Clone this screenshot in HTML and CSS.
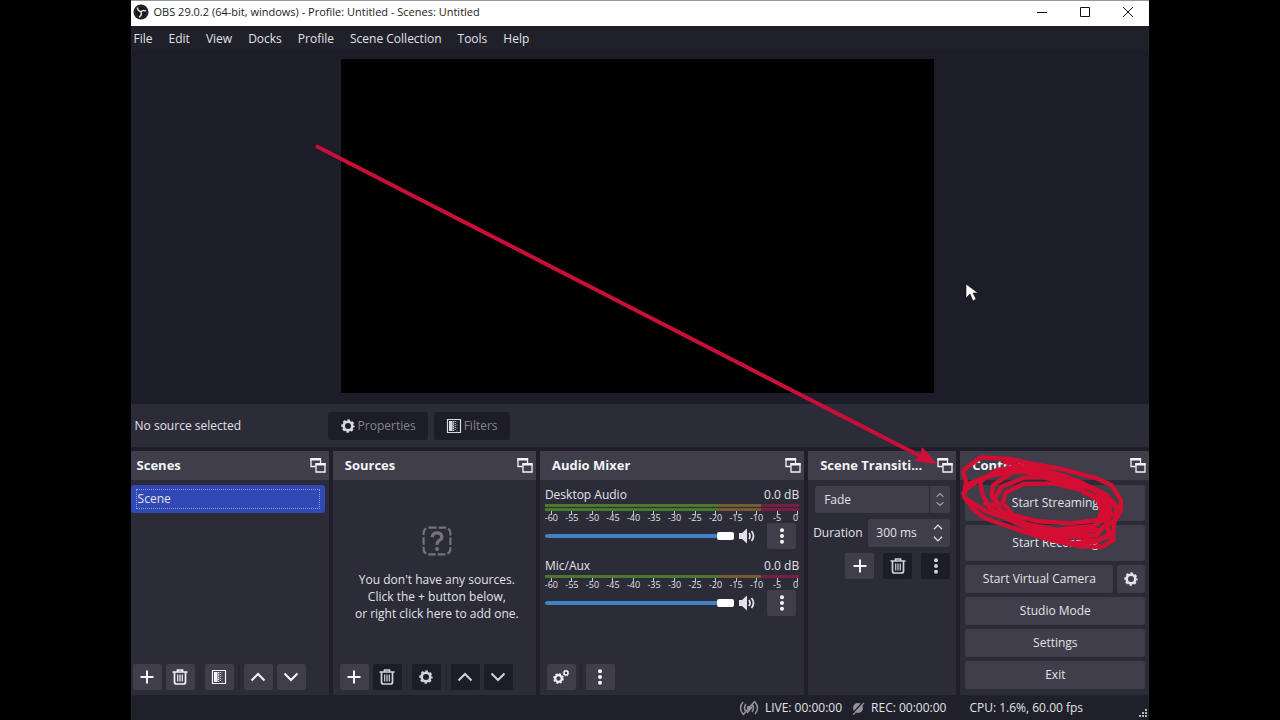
FILE: index.html
```
<!DOCTYPE html>
<html lang="en">
  <head>
    <meta charset="utf8" />
    <meta name="viewport" content="width=device-width, initial-scale=1" />
    <title>OBS 29.0.2</title>
    <link rel="stylesheet" href="styles.css">
  </head>
  <body>
    <svg class="sprite" aria-hidden="true">
      <symbol id="plus" viewBox="0 0 16 16"><path d="M8 1.5v13M1.5 8h13" fill="none" stroke="currentColor" stroke-width="2" /></symbol>
      <symbol id="trash" viewBox="0 0 16 16"><path d="M.5 3h15M5.500 2.500V1h5v1.500M2.500 3.500v9.500q0 2 2 2h7q2 0 2-2V3.500" fill="none" stroke="currentColor" stroke-width="1.700" /><path d="M5.700 5.500v7M8 5.500v7M10.300 5.500v7" stroke="currentColor" stroke-width="1.200" /></symbol>
      <symbol id="filter" viewBox="0 0 16 16"><path d="M1.500 1.500h13v13h-13z" fill="none" stroke="currentColor" stroke-width="1.200" /><path d="M3 3h3.500v10H3z" fill="currentColor" /><path d="M7.500 3v10" stroke="currentColor" stroke-width="1.400" stroke-dasharray="1.500 .7" /><path d="M9.300 3v10" stroke="currentColor" stroke-dasharray="1 1" /><path d="M11 3.500v10" stroke="currentColor" stroke-width=".7" stroke-dasharray="1 2" /></symbol>
      <symbol id="up" viewBox="0 0 16 16"><path d="M1.500 11.500L8 5l6.500 6.500" fill="none" stroke="currentColor" stroke-width="2" /></symbol>
      <symbol id="down" viewBox="0 0 16 16"><path d="M1.500 4.500L8 11l6.500-6.500" fill="none" stroke="currentColor" stroke-width="2" /></symbol>
      <symbol id="gear" viewBox="0 0 16 16"><circle cx="8" cy="8" r="4.300" fill="none" stroke="currentColor" stroke-width="2.600" /><circle cx="8" cy="8" r="5.700" fill="none" stroke="currentColor" stroke-width="2" stroke-dasharray="2.500 1.977" stroke-dashoffset="1.250" /></symbol>
      <symbol id="dots" viewBox="0 0 16 16"><g fill="currentColor"><circle cx="8" cy="2.200" r="2" /><circle cx="8" cy="8" r="2" /><circle cx="8" cy="13.800" r="2" /></g></symbol>
      <symbol id="float" viewBox="0 0 16 16"><path d="M5.500 9.500h-4.500v-7.500h9.500v4" fill="none" stroke="currentColor" stroke-width="1.300" /><path d="M.4 1h10.700v2.500H.4zM5.400 6h10.200v2.500H5.400z" fill="currentColor" /><path d="M6 7h9v8h-9z" fill="none" stroke="currentColor" stroke-width="1.300" /></symbol>
      <symbol id="speaker" viewBox="0 0 16 16"><path d="M0 5h3l5-4.500v15L3 11H0z" fill="currentColor" /><path d="M10 5q2 3 0 6M12.500 3q4 5 0 10" fill="none" stroke="currentColor" stroke-width="1.800" /></symbol>
    </svg>

    <div class="window">
      <header class="title-bar">
        <svg class="logo" viewBox="0 0 16 16">
          <circle cx="8" cy="8" r="7.500" fill="#17151a" />
          <circle cx="8" cy="8" r="6" fill="none" stroke="#555" stroke-width=".5" />
          <path d="M4.500 3.500q0 3.500 3.500 4.300M12.800 7q-3-1.500-4.800.8M6 13q3.300-1.500 2-5.200" fill="none" stroke="#ddd" stroke-width="1.500" />
        </svg>
        <span class="title-text">OBS 29.0.2 (64-bit, windows) - Profile: Untitled - Scenes: Untitled</span>
        <div class="window-buttons">
          <button aria-label="Minimize"><svg viewBox="0 0 10 10"><path d="M0 5.500h10" /></svg></button>
          <button aria-label="Maximize"><svg viewBox="0 0 10 10"><path d="M.5.5h9v9h-9z" /></svg></button>
          <button aria-label="Close"><svg viewBox="0 0 10 10"><path d="M0 0l10 10M10 0L0 10" /></svg></button>
        </div>
      </header>

      <nav class="menu-bar">
        <button>File</button>
        <button>Edit</button>
        <button>View</button>
        <button>Docks</button>
        <button>Profile</button>
        <button>Scene Collection</button>
        <button>Tools</button>
        <button>Help</button>
      </nav>

      <main class="preview"><div class="canvas"></div></main>

      <div class="context-bar">
        <span class="context-label">No source selected</span>
        <button disabled><svg><use href="#gear" /></svg>Properties</button>
        <button disabled><svg><use href="#filter" /></svg>Filters</button>
      </div>

      <div class="docks">
        <section class="dock dock-scenes">
          <h2><span>Scenes</span><svg><use href="#float" /></svg></h2>
          <ul class="scene-list">
            <li class="selected"><span>Scene</span></li>
          </ul>
          <div class="toolbar">
            <button class="tool" aria-label="Add scene"><svg><use href="#plus" /></svg></button>
            <button class="tool" aria-label="Remove scene"><svg><use href="#trash" /></svg></button>
            <i class="separator"></i>
            <button class="tool" aria-label="Scene filters"><svg><use href="#filter" /></svg></button>
            <i class="separator"></i>
            <button class="tool" aria-label="Move scene up"><svg><use href="#up" /></svg></button>
            <button class="tool" aria-label="Move scene down"><svg><use href="#down" /></svg></button>
          </div>
        </section>

        <section class="dock dock-sources">
          <h2><span>Sources</span><svg><use href="#float" /></svg></h2>
          <div class="empty-sources">
            <svg viewBox="0 0 28 28">
              <rect x="1.500" y="1.500" width="25" height="25" rx="5" fill="none" stroke="currentColor" stroke-width="2" stroke-dasharray="7 2" />
              <path d="M9.500 10.500q.5-4 4.500-4t4.500 3.500q0 2.200-2.500 3.700-2 1.200-2 3.800" fill="none" stroke="currentColor" stroke-width="3" />
              <circle cx="14" cy="21.500" r="1.800" fill="currentColor" />
            </svg>
            <p>You don't have any sources.<br>Click the + button below,<br>or right click here to add one.</p>
          </div>
          <div class="toolbar">
            <button class="tool" aria-label="Add source"><svg><use href="#plus" /></svg></button>
            <button class="tool" aria-label="Remove source" disabled><svg><use href="#trash" /></svg></button>
            <i class="separator"></i>
            <button class="tool" aria-label="Source properties" disabled><svg><use href="#gear" /></svg></button>
            <i class="separator"></i>
            <button class="tool" aria-label="Move source up" disabled><svg><use href="#up" /></svg></button>
            <button class="tool" aria-label="Move source down" disabled><svg><use href="#down" /></svg></button>
          </div>
        </section>

        <section class="dock dock-mixer">
          <h2><span>Audio Mixer</span><svg><use href="#float" /></svg></h2>
          <div class="channels">
            <div class="channel">
              <div class="channel-name"><label for="desktop-volume">Desktop Audio</label><span>0.0 dB</span></div>
              <div class="meter"></div>
              <div class="meter"></div>
              <div class="scale"><span>-60</span><span>-55</span><span>-50</span><span>-45</span><span>-40</span><span>-35</span><span>-30</span><span>-25</span><span>-20</span><span>-15</span><span>-10</span><span>-5</span><span>0</span></div>
              <div class="volume">
                <input id="desktop-volume" type="range" value="100" />
                <svg><use href="#speaker" /></svg>
                <button class="tool" aria-label="Desktop audio options"><svg><use href="#dots" /></svg></button>
              </div>
            </div>
            <div class="channel">
              <div class="channel-name"><label for="mic-volume">Mic/Aux</label><span>0.0 dB</span></div>
              <div class="meter"></div>
              <div class="scale"><span>-60</span><span>-55</span><span>-50</span><span>-45</span><span>-40</span><span>-35</span><span>-30</span><span>-25</span><span>-20</span><span>-15</span><span>-10</span><span>-5</span><span>0</span></div>
              <div class="volume">
                <input id="mic-volume" type="range" value="100" />
                <svg><use href="#speaker" /></svg>
                <button class="tool" aria-label="Mic options"><svg><use href="#dots" /></svg></button>
              </div>
            </div>
          </div>
          <div class="toolbar">
            <button class="tool" aria-label="Advanced audio properties">
              <svg viewBox="0 0 16 16" fill="none" stroke="currentColor">
                <circle cx="5.500" cy="9.500" r="3.300" stroke-width="2.200" />
                <circle cx="5.500" cy="9.500" r="4.500" stroke-width="1.600" stroke-dasharray="2 1.534" />
                <circle cx="13" cy="4" r="2" stroke-width="1.400" />
                <circle cx="13" cy="4" r="2.900" stroke-width=".8" stroke-dasharray="1.200 1.077" />
              </svg>
            </button>
            <i class="separator"></i>
            <button class="tool" aria-label="Mixer menu"><svg><use href="#dots" /></svg></button>
          </div>
        </section>

        <section class="dock dock-transitions">
          <h2><span>Scene Transiti...</span><svg><use href="#float" /></svg></h2>
          <div class="transitions">
            <div class="combo">
              <select aria-label="Transition"><option>Fade</option></select>
              <div class="combo-arrows"><svg><use href="#up" /></svg><svg><use href="#down" /></svg></div>
            </div>
            <div class="duration">
              <label for="duration">Duration</label>
              <div class="spin-box">
                <input id="duration" type="text" value="300 ms" />
                <div class="spin-buttons">
                  <button aria-label="Increase"><svg><use href="#up" /></svg></button>
                  <button aria-label="Decrease"><svg><use href="#down" /></svg></button>
                </div>
              </div>
            </div>
            <div class="transition-tools">
              <button class="tool" aria-label="Add transition"><svg><use href="#plus" /></svg></button>
              <button class="tool" aria-label="Remove transition" disabled><svg><use href="#trash" /></svg></button>
              <button class="tool" aria-label="Transition options" disabled><svg><use href="#dots" /></svg></button>
            </div>
          </div>
        </section>

        <section class="dock dock-controls">
          <h2><span>Controls</span><svg><use href="#float" /></svg></h2>
          <div class="controls">
            <button class="tall">Start Streaming</button>
            <button class="tall">Start Recording</button>
            <div class="virtual-camera">
              <button>Start Virtual Camera</button>
              <button aria-label="Virtual camera settings"><svg><use href="#gear" /></svg></button>
            </div>
            <button>Studio Mode</button>
            <button>Settings</button>
            <button>Exit</button>
          </div>
        </section>
      </div>

      <footer class="status-bar">
        <div class="status-item">
          <svg class="live-icon" viewBox="0 0 20 16" fill="none" stroke="currentColor" stroke-width="1.500"><path d="M4 2q-5 6 0 12M7 4q-3 4 0 8M16 2q5 6 0 12M13 4q3 4 0 8M4 15L16 1M8 13l5-6" /><circle cx="10" cy="8" r="1.500" /></svg>
          <span>LIVE: 00:00:00</span>
        </div>
        <div class="status-item">
          <svg class="rec-icon" viewBox="0 0 14 14"><circle cx="7" cy="7" r="5" fill="currentColor" /><path d="M1 13L12 1" stroke="#1f202a" stroke-width="1.500" /><path d="M2 14L13 2" stroke="currentColor" stroke-width="1.200" /></svg>
          <span>REC: 00:00:00</span>
        </div>
        <div class="status-item cpu">CPU: 1.6%, 60.00 fps</div>
        <svg class="grip" viewBox="0 0 9 9"><path d="M7 1h2M4 4h2M7 4h2M1 7h2M4 7h2M7 7h2" stroke="#b5b5bd" stroke-width="2" /></svg>
      </footer>
    </div>

    <!-- Hand-drawn arrow and scribble above the window -->
    <svg class="annotations" viewBox="0 0 1280 720">
      <path d="M316 146L922 457" stroke="#c80f38" stroke-width="4" />
      <path d="M937 464L914 461L920 456L922 447z" fill="#d01038" />
      <g class="scribble" transform="translate(950 440) scale(.3333)">
        <path d="M38 92L92 52L180 57L250 72L340 88L440 115L485 136L513 180L512 215L492 248L490 300L458 320L395 320L300 300L200 268L105 235L70 208L42 170L48 125L38 92" />
        <path d="M48 148L90 118L160 88L230 84L330 105L420 140L470 165L500 200L495 240L450 270L360 275L260 265L175 238L120 205L98 165L90 125L140 90L235 78L350 110L440 155L480 195L470 250L480 290L430 302L330 280L230 255L150 210L125 165L130 135L190 95L280 95L390 125L470 170L505 210" />
        <path d="M38 165L60 130L130 105L215 92L310 118L390 145L445 180L455 215L445 240L360 250L260 243L190 225L158 190L168 158L220 132L310 130L395 150L460 190L478 240L440 285L340 292L240 262L160 225L135 175L155 140L225 112L320 110L430 145L490 190" />
        <path d="M45 175L110 215L210 248L320 270L430 258L485 225L465 180L395 155M100 190L140 198L170 235L260 278L370 310L440 305L490 275" />
        <path d="M160 65L230 82L240 100L310 120L400 140M180 240L280 270L400 280L450 245L475 210" />
      </g>
      <path d="M966 284v14l4-4l3 7l3-2l-3-6h5z" fill="#fff" stroke="#111" stroke-width=".6" />
    </svg>
  </body>
</html>
```
FILE: styles.css
```
* {
  box-sizing: border-box;
}
body {
  margin: 0;
  background: #000;
  color: #e2e2e8;
  font: 12px/18px "Open Sans", "Noto Sans", sans-serif;
}
button, input, select {
  margin: 0;
  padding: 0;
  border: 0;
  background: none;
  color: inherit;
  font: inherit;
}
svg {
  flex: none;
  width: 16px;
  height: 16px;
}
.sprite {
  display: none;
}
.window {
  display: flex;
  flex-direction: column;
  width: 79.6%;
  min-height: 100vh;
  margin: 0 auto;
  background: #1f1e2a;
}

/* Title and menu */
.title-bar {
  display: flex;
  align-items: center;
  height: 26px;
  padding: 0 0 4px 2px;
  border-top: 1px solid #9a959c;
  background: #fff;
  color: #222;
}
.logo {
  width: 16px;
  height: 16px;
  margin-right: 5px;
}
.title-text {
  flex: 1;
  font-size: 11px;
}
.window-buttons {
  display: flex;
}
.window-buttons button {
  display: flex;
  justify-content: center;
  width: 43px;
}
.window-buttons svg {
  width: 10px;
  height: 10px;
  fill: none;
  stroke: #111;
}
.menu-bar {
  display: flex;
  gap: 16px;
  height: 24px;
  padding: 1px 0 0 3px;
  background: #1f2029;
}

/* Preview */
.preview {
  display: flex;
  flex: 1;
  align-items: flex-start;
  justify-content: center;
  padding: 9px 5px 10px 0;
  background: #1d1c29;
}
.canvas {
  width: 58.5%;
  aspect-ratio: 16 / 9;
  background: #000;
}

/* Source context bar */
.context-bar {
  display: flex;
  align-items: center;
  gap: 6px;
  height: 43px;
  margin-bottom: 4px;
  padding-left: 4px;
  background: #2c2b38;
}
.context-label {
  width: 187px;
}
.context-bar button {
  display: flex;
  align-items: center;
  gap: 2px;
  height: 28px;
  padding: 0 12px;
  border-radius: 3px;
  background: #1d1c29;
  color: #85848e;
}
.context-bar svg {
  color: #d8d8e0;
}

/* Docks */
.docks {
  display: grid;
  grid-template-columns: 198fr 203fr 264fr 148fr 189fr;
  gap: 4px;
}
.dock {
  display: flex;
  flex-direction: column;
  min-width: 0;
  min-height: 244px;
  background: #2c2b38;
}
.dock h2 {
  display: flex;
  align-items: center;
  gap: 8px;
  height: 29px;
  margin: 0;
  padding: 0 3px 1px 12px;
  background: #3f3e4a;
  color: #f4f4f8;
  font-size: 13px;
  font-weight: 700;
}
.dock h2 span {
  flex: 1;
  white-space: nowrap;
}
.dock-scenes h2 {
  padding-left: 6px;
}
.scene-list {
  flex: 1;
  margin: 5px 4px 0 0;
  padding: 0;
  list-style: none;
}
.scene-list .selected {
  padding: 4px 5px;
  border-radius: 3px;
  background: #3149b4;
}
.scene-list span {
  display: block;
  padding: 0 1px;
  border: 1px dotted #8f9ee0;
}
.toolbar {
  display: flex;
  gap: 4px;
  padding: 0 7px 5px;
}
.dock-scenes .toolbar {
  padding-left: 2px;
}
.tool {
  display: flex;
  align-items: center;
  justify-content: center;
  width: 29px;
  height: 26px;
  border-radius: 2px;
  background: #3f3e4a;
  color: #f4f4f8;
}
.tool:disabled {
  background: #1d1c29;
  color: #d2d2da;
}
.separator {
  width: 2px;
  background: #272632;
}
.empty-sources {
  display: flex;
  flex: 1;
  flex-direction: column;
  align-items: center;
  padding: 46px 0 0 5px;
  text-align: center;
}
.empty-sources svg {
  width: 30px;
  height: 30px;
  color: #74737d;
}
.empty-sources p {
  margin: 15px 0 0;
  line-height: 17px;
  white-space: nowrap;
}

/* Mixer */
.channels {
  flex: 1;
  padding: 6px 5px 0;
}
.channel {
  margin-bottom: 9px;
}
.channel-name {
  display: flex;
  justify-content: space-between;
}
.meter {
  height: 3px;
  margin-bottom: 1px;
  background: linear-gradient(90deg, #4a792b 68%, #755b32 68%, #755b32 85%, #761f40 85%);
}
.scale {
  display: flex;
  justify-content: space-between;
  height: 12px;
  padding: 0 1px 0 6px;
  font-size: 9px;
  line-height: 12px;
}
.scale span {
  display: flex;
  position: relative;
  justify-content: center;
  width: 1px;
}
.scale span::before {
  position: absolute;
  top: -1px;
  width: 1px;
  height: 4px;
  background: #c8c8d0;
  content: "";
}
.scale span:last-child {
  justify-content: flex-end;
}
.volume {
  display: flex;
  align-items: center;
  height: 24px;
}
.volume input {
  flex: 1;
  min-width: 0;
  height: 8px;
  appearance: none;
}
.volume input::-webkit-slider-runnable-track {
  height: 4px;
  border-radius: 2px;
  background: #3f82c6;
}
.volume input::-webkit-slider-thumb {
  width: 17px;
  height: 8px;
  margin-top: -2px;
  border-radius: 2px;
  background: #fff;
  appearance: none;
}
.volume > svg {
  margin: 0 12px 0 5px;
}
.volume .tool {
  margin-right: 3px;
}

/* Transitions */
.transitions {
  display: flex;
  flex-direction: column;
  gap: 6px;
  padding: 6px 6px 0 5px;
}
.combo {
  display: flex;
  gap: 1px;
  height: 27px;
  margin-left: 2px;
}
.combo select {
  flex: 1;
  min-width: 0;
  padding-left: 9px;
  border-radius: 3px 0 0 3px;
  background: #3f3e4a;
  appearance: none;
}
.combo-arrows {
  display: flex;
  flex-direction: column;
  align-items: center;
  justify-content: center;
  gap: 1px;
  width: 20px;
  border-radius: 0 3px 3px 0;
  background: #3f3e4a;
}
.combo-arrows svg {
  width: 8px;
  height: 8px;
}
.duration {
  display: flex;
  align-items: center;
  justify-content: space-between;
  height: 28px;
}
.spin-box {
  display: flex;
  width: 82px;
  height: 28px;
  padding: 0 7px 0 8px;
  border-radius: 3px;
  background: #3f3e4a;
}
.spin-box input {
  flex: 1;
  min-width: 0;
}
.spin-buttons {
  display: flex;
  flex-direction: column;
  justify-content: space-evenly;
}
.spin-buttons button {
  display: flex;
}
.spin-buttons svg {
  width: 10px;
  height: 10px;
}
.transition-tools {
  display: flex;
  justify-content: flex-end;
  gap: 9px;
}

/* Controls */
.controls {
  display: flex;
  flex-direction: column;
  gap: 4px;
  padding: 5px 4px 0 5px;
}
.controls button {
  height: 28px;
  border-radius: 3px;
  background: #3f3e4a;
}
.controls .tall {
  height: 36px;
}
.virtual-camera {
  display: grid;
  grid-template-columns: 1fr 28px;
  gap: 4px;
}
.virtual-camera button {
  display: flex;
  align-items: center;
  justify-content: center;
}

/* Status bar */
.status-bar {
  display: flex;
  align-items: center;
  justify-content: flex-end;
  gap: 9px;
  height: 25px;
  padding-right: 2px;
  background: #1f202a;
}
.status-item {
  display: flex;
  align-items: center;
  gap: 6px;
}
.live-icon {
  width: 20px;
  color: #94939b;
}
.rec-icon {
  width: 14px;
  height: 14px;
  color: #94939b;
}
.cpu {
  width: 160px;
  margin-left: 14px;
}
.grip {
  align-self: flex-end;
  width: 9px;
  height: 9px;
  margin-bottom: 2px;
}

.annotations {
  position: absolute;
  top: 0;
  left: 0;
  width: 100%;
  height: auto;
  pointer-events: none;
}
.scribble {
  fill: none;
  stroke: #d40d33;
  stroke-width: 13;
  stroke-linejoin: round;
}
```
